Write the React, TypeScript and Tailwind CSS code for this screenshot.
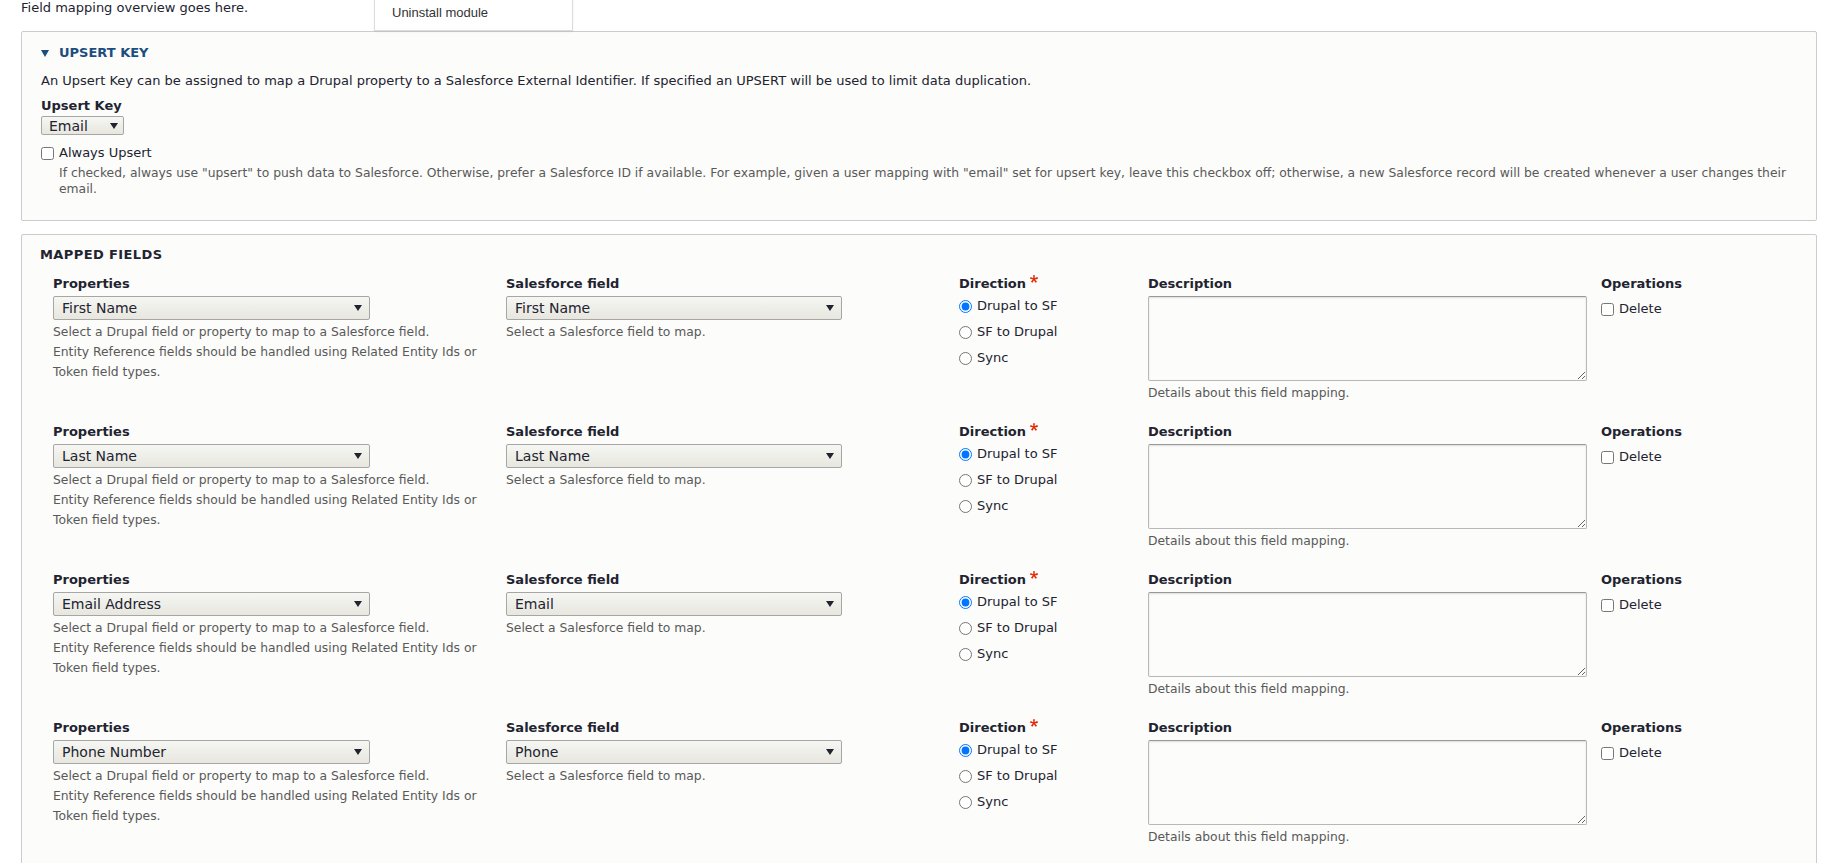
import React from "react";

const rows = [
  { prop: "First Name", sf: "First Name" },
  { prop: "Last Name", sf: "Last Name" },
  { prop: "Email Address", sf: "Email" },
  { prop: "Phone Number", sf: "Phone" },
];

const Arrow = () => (
  <svg width="8" height="6" viewBox="0 0 8 6" className="shrink-0">
    <path d="M0 0h8L4 6z" fill="#222330" />
  </svg>
);

// required marker, same shape as the theme's asterisk
const Required = () => (
  <svg width="8" height="8" viewBox="0 0 16 16" className="ml-[4px] -translate-y-[5px]">
    <path
      fill="#e32700"
      d="M0,7.562l1.114-3.438c2.565,0.906,4.43,1.688,5.59,2.35C6.398,3.553,6.237,1.544,6.22,0.447h3.511c-0.05,1.597-0.234,3.6-0.558,6.003c1.664-0.838,3.566-1.613,5.714-2.325L16,7.562c-2.05,0.678-4.06,1.131-6.028,1.356c0.984,0.856,2.372,2.381,4.166,4.575l-2.906,2.059c-0.935-1.274-2.041-3.009-3.316-5.206c-1.194,2.275-2.244,4.013-3.147,5.206l-2.856-2.059c1.872-2.307,3.211-3.832,4.017-4.575C3.849,8.516,1.872,8.058,0,7.562"
    />
  </svg>
);

const FakeSelect = ({ value, width }: { value: string; width: string }) => (
  <div
    className={`${width} mt-[2px] flex h-[24px] items-center justify-between rounded-[2px] border border-[#a6a6a6] bg-gradient-to-b from-[#f6f6f3] to-[#e7e7df] pl-[8px] pr-[7px] text-[14px] text-[#222330]`}
  >
    <span>{value}</span>
    <Arrow />
  </div>
);

const MappingRow = ({ prop, sf }: { prop: string; sf: string }) => (
  <div className="flex h-[148px]">
    <div className="flex w-[453px] flex-col">
      <label className="font-bold">Properties</label>
      <FakeSelect value={prop} width="w-[317px]" />
      <p className="mt-[2px] w-[440px] text-[12.35px] leading-5 text-[#595959]">
        Select a Drupal field or property to map to a Salesforce field.
        <br />
        Entity Reference fields should be handled using Related Entity Ids or Token field types.
      </p>
    </div>

    <div className="flex w-[453px] flex-col">
      <label className="font-bold">Salesforce field</label>
      <FakeSelect value={sf} width="w-[336px]" />
      <p className="mt-[2px] text-[12.35px] leading-5 text-[#595959]">Select a Salesforce field to map.</p>
    </div>

    <div className="flex w-[189px] flex-col">
      <label className="flex items-center font-bold">
        Direction
        <Required />
      </label>
      <div className="mt-[2px] flex flex-col gap-[6px]">
        {["Drupal to SF", "SF to Drupal", "Sync"].map((dir, i) => (
          <label key={dir} className="flex h-5 items-center gap-[5px]">
            <input type="radio" name={`dir-${prop}`} defaultChecked={i === 0} className="m-0" />
            {dir}
          </label>
        ))}
      </div>
    </div>

    <div className="flex w-[453px] flex-col">
      <label className="font-bold">Description</label>
      <textarea className="mt-[2px] h-[85px] w-[439px] rounded-[2px] border border-[#b8b8b8] border-t-[#999] bg-[#fcfcfa] shadow-[inset_0_1px_2px_rgba(0,0,0,0.125)]" />
      <p className="mt-[2px] text-[12.35px] leading-5 text-[#595959]">Details about this field mapping.</p>
    </div>

    <div className="flex flex-col">
      <label className="font-bold">Operations</label>
      <label className="mt-[5px] flex h-5 items-center gap-[5px]">
        <input type="checkbox" className="m-0" />
        Delete
      </label>
    </div>
  </div>
);

export default function App() {
  return (
    <div className="min-h-screen bg-white font-['DejaVu_Sans',sans-serif] text-[13px] leading-5 text-[#222330]">
      <div className="relative ml-[21px] mr-[17px]">
        <p className="-mt-[2px]">Field mapping overview goes here.</p>

        {/* open operations menu */}
        <div className="absolute left-[353px] top-[-12px] z-10 h-[45px] w-[199px] border border-t-0 border-[#dcdcdc] bg-white pl-[17px] pt-[19px] font-['Liberation_Sans',Arial,sans-serif] text-[13px] leading-[15px] text-[#333] shadow-[0_1px_2px_rgba(0,0,0,0.06)]">
          Uninstall module
        </div>

        <section className="mt-[13px] rounded-[2px] border border-[#ccc] bg-[#fcfcfa] px-[19px] pb-[23px] pt-[11px]">
          <div className="flex items-center gap-[10px] font-bold text-[#1b4e7e]">
            <svg width="8" height="7" viewBox="0 0 8 7">
              <path d="M0 0h8L4 7z" fill="#1b4e7e" />
            </svg>
            UPSERT KEY
          </div>
          <p className="mt-[8px]">
            An Upsert Key can be assigned to map a Drupal property to a Salesforce External Identifier. If specified an UPSERT will be used to limit data duplication.
          </p>
          <label className="mt-[5px] block font-bold">Upsert Key</label>
          <div className="flex h-[19px] w-[83px] items-center justify-between rounded-[2px] border border-[#a6a6a6] bg-gradient-to-b from-[#f6f6f3] to-[#e7e7df] pl-[7px] pr-[5px] text-[14px]">
            <span>Email</span>
            <Arrow />
          </div>
          <label className="mt-[8px] flex h-5 items-center gap-[5px]">
            <input type="checkbox" className="m-0" />
            Always Upsert
          </label>
          <p className="mt-[2px] pl-[18px] text-[12.35px] leading-4 text-[#595959]">
            If checked, always use "upsert" to push data to Salesforce. Otherwise, prefer a Salesforce ID if available. For example, given a user mapping with "email" set for upsert key, leave this checkbox off; otherwise, a new Salesforce record will be created whenever a user changes their email.
          </p>
        </section>

        <section className="mt-[13px] rounded-[2px] border border-[#ccc] bg-[#fcfcfa] pb-[40px] pl-[18px] pt-[10px]">
          <h2 className="font-bold uppercase tracking-[0.4px]">Mapped fields</h2>
          <div className="mt-[9px] flex flex-col pl-[13px]">
            {rows.map((r) => (
              <MappingRow key={r.prop} prop={r.prop} sf={r.sf} />
            ))}
          </div>
        </section>
      </div>
    </div>
  );
}
